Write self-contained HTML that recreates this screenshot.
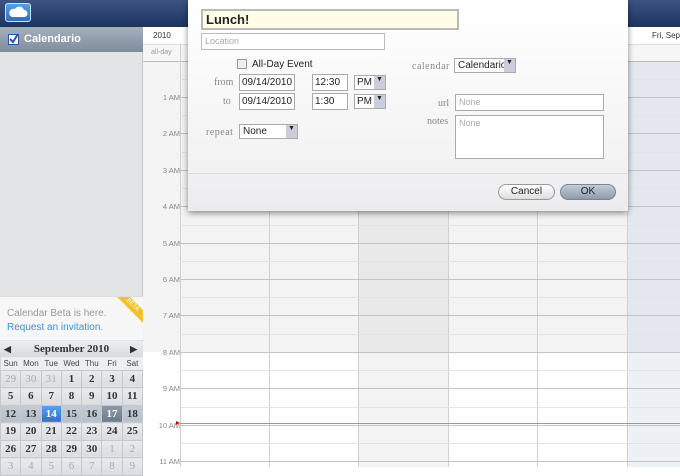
<!DOCTYPE html>
<html><head><meta charset="utf-8"><style>
*{box-sizing:border-box;margin:0;padding:0}
body{width:680px;height:467px;overflow:hidden;position:relative;font-family:"Liberation Sans",sans-serif;background:#fff}
.abs{position:absolute}
#top{left:0;top:0;width:680px;height:27px;background:linear-gradient(#3c5483,#1d3361)}
#logo{left:5px;top:3px;width:26px;height:19px;border:1px solid #cfe0f5;border-radius:3px;background:linear-gradient(#5a9ee0,#2d6fbf)}
#side{left:0;top:27px;width:143px;height:440px;background:#e3e4e6;border-right:1px solid #c8c8c8}
#calrow{left:0;top:27px;width:143px;height:25px;background:linear-gradient(#a6b0bd,#7f8c9c);color:#fff;font-weight:bold;font-size:11px;line-height:25px;padding-left:24px}
#chk{left:8px;top:34px;width:11px;height:11px;background:#fff;border:1px solid #2a56a0}
#beta{left:0;top:296px;width:143px;height:44px;background:#f7f7f7;border-top:1px solid #ddd;font-size:10px;padding:10px 0 0 7px;color:#999;line-height:14px;overflow:hidden}
#beta a{color:#3f8fce}
#ribbon{right:-14px;top:4px;width:50px;height:9px;background:#f2c22c;transform:rotate(45deg);font-size:6px;color:#fff;text-align:center;line-height:9px}
#mini{left:0;top:341px;width:143px;height:126px;background:#d3d7dc;font-family:"Liberation Serif",serif}
#mini .hd{height:16px;background:linear-gradient(#eceef0,#d8dbde);font-weight:bold;font-size:11px;text-align:center;line-height:16px;color:#333;position:relative}
#mini table{border-collapse:collapse;width:143px;table-layout:fixed}
#mini td{text-align:center;font-size:11px;font-weight:bold;color:#333;height:17.5px;border:1px solid #c5c9ce;background:linear-gradient(#e9ebee,#d9dce0)}
#mini th{font-size:8px;font-weight:normal;color:#444;height:13px;background:#eceef0;font-family:"Liberation Sans",sans-serif}
#mini td.o{color:#aaa;font-weight:normal}
#mini tr.w2 td{background:linear-gradient(#c6ccd4,#b7bfc9)}
#mini td.t{background:linear-gradient(#5ea2e8,#2a72cc)!important;color:#fff}
#mini td.s{background:linear-gradient(#8d9aaa,#6c7b8d)!important;color:#fff}
#grid{left:143px;top:27px;width:537px;height:440px}
.lbl{position:absolute;right:0;width:33px;text-align:right;font-size:7.5px;color:#888}
</style></head><body>
<div id="top" class="abs"></div>
<div id="logo" class="abs"><svg width="24" height="17"><path d="M6 13 h12 a3.5 3.5 0 0 0 0-7 a5 5 0 0 0-9-1 a3.5 3.5 0 0 0-3 8z" fill="#fff"/></svg></div>
<div id="side" class="abs"></div>
<div id="calrow" class="abs">Calendario</div>
<div id="chk" class="abs"><svg width="10" height="10" style="position:absolute;left:0;top:-1px"><path d="M1 5 L4 8 L9 0" stroke="#2a56a0" stroke-width="2" fill="none"/></svg></div>
<div id="beta" class="abs">Calendar Beta is here.<br><a>Request an invitation.</a><div id="ribbon" class="abs">BETA</div></div>
<div id="mini" class="abs"><div class="hd"><span style="position:absolute;left:4px;font-size:9px">◀</span>September 2010<span style="position:absolute;right:6px;font-size:9px">▶</span></div>
<table>
<tr><th>Sun</th><th>Mon</th><th>Tue</th><th>Wed</th><th>Thu</th><th>Fri</th><th>Sat</th></tr>
<tr><td class="o">29</td><td class="o">30</td><td class="o">31</td><td>1</td><td>2</td><td>3</td><td>4</td></tr>
<tr><td>5</td><td>6</td><td>7</td><td>8</td><td>9</td><td>10</td><td>11</td></tr>
<tr class="w2"><td>12</td><td>13</td><td class="t">14</td><td>15</td><td>16</td><td class="s">17</td><td>18</td></tr>
<tr><td>19</td><td>20</td><td>21</td><td>22</td><td>23</td><td>24</td><td>25</td></tr>
<tr><td>26</td><td>27</td><td>28</td><td>29</td><td>30</td><td class="o">1</td><td class="o">2</td></tr>
<tr><td class="o">3</td><td class="o">4</td><td class="o">5</td><td class="o">6</td><td class="o">7</td><td class="o">8</td><td class="o">9</td></tr>
</table></div>
<div id="grid" class="abs">
<svg width="537" height="440" style="position:absolute;left:0;top:0">
<rect x="0" y="0" width="537" height="440" fill="#fff"/>
<rect x="37" y="35" width="500" height="290" fill="#f3f3f3"/>
<rect x="0" y="35" width="37" height="290" fill="#f3f3f3"/>
<rect x="215" y="35" width="90" height="290" fill="#e9e9e9"/>
<rect x="215" y="325" width="90" height="115" fill="#f3f3f3"/>
<rect x="484" y="17" width="53" height="308" fill="#e4e8ee"/>
<rect x="484" y="325" width="53" height="115" fill="#edf1f6"/>
<rect x="0" y="0" width="537" height="17" fill="#fff"/>
<rect x="0" y="17" width="537" height="18" fill="#f6f6f6"/>
<line x1="0" y1="17.5" x2="537" y2="17.5" stroke="#ddd"/>
<line x1="0" y1="34.5" x2="537" y2="34.5" stroke="#bbb"/>
<g stroke="#d0d0d0">
<line x1="37.5" y1="17" x2="37.5" y2="440"/><line x1="126.5" y1="35" x2="126.5" y2="440"/><line x1="215.5" y1="35" x2="215.5" y2="440"/><line x1="305.5" y1="35" x2="305.5" y2="440"/><line x1="394.5" y1="35" x2="394.5" y2="440"/><line x1="484.5" y1="0" x2="484.5" y2="440"/>
</g>
<g id="h"></g>
<path d="M33 394 l4 2 l-4 2z" fill="#c00"/>
</svg>
<div class="abs" style="left:10px;top:4px;font-size:8px;color:#333">2010</div>
<div class="abs" style="left:8px;top:22px;font-size:7px;color:#999">all-day</div>
<div class="abs" style="left:509px;top:4px;font-size:8px;color:#333">Fri, Sep</div>
</div>
<script>
var g=document.getElementById('h'),s='',L=document.getElementById('grid');
for(var i=1;i<=11;i++){var y=Math.round(70+(i-1)*36.4);s+='<line x1="37" y1="'+(y+.5)+'" x2="537" y2="'+(y+.5)+'" stroke="#c4c4c4"/><line x1="37" y1="'+(y-17.5)+'" x2="537" y2="'+(y-17.5)+'" stroke="#e3e3e3"/>';
var d=document.createElement('div');d.className='lbl';d.style.top=(y-4)+'px';d.style.right='500px';d.textContent=i+' AM';L.appendChild(d);}
s+='<line x1="37" y1="396.5" x2="537" y2="396.5" stroke="#999"/>';
g.innerHTML=s;
</script>
<div class="abs" style="left:188px;top:0;width:440px;height:211px;background:linear-gradient(#fff,#f4f4f5 70%,#ececee);box-shadow:0 2px 6px rgba(0,0,0,.45);font-size:10px;color:#222">
<div class="abs" style="left:13px;top:9px;width:258px;height:21px;border:2px solid #b9b9b9;background:#fffde6;font-weight:bold;font-size:13px;padding-left:3px;line-height:17px">Lunch!</div>
<div class="abs" style="left:13px;top:33px;width:184px;height:17px;border:1px solid #bbb;background:#fff;color:#aaa;font-size:9px;padding:2px 3px">Location</div>
<div class="abs" style="left:49px;top:59px;width:10px;height:10px;border:1px solid #999;background:#eee"></div>
<div class="abs" style="left:64px;top:59px">All-Day Event</div>
<div class="abs" style="left:26px;top:77px;color:#888;font-family:'Liberation Serif',serif">from</div>
<div class="abs" style="left:35px;top:96px;color:#888;font-family:'Liberation Serif',serif">to</div>
<div class="abs" style="left:18px;top:127px;color:#888;font-family:'Liberation Serif',serif;letter-spacing:.5px">repeat</div>
<div class="abs" style="left:141px;top:77px;color:#888;font-family:'Liberation Serif',serif">at</div>
<div class="abs" style="left:141px;top:96px;color:#888;font-family:'Liberation Serif',serif">at</div>
<div class="abs" style="left:51px;top:74px;width:56px;height:17px;border:1px solid #aaa;background:#fff;padding:2px">09/14/2010</div>
<div class="abs" style="left:51px;top:93px;width:56px;height:17px;border:1px solid #aaa;background:#fff;padding:2px">09/14/2010</div>
<div class="abs" style="left:124px;top:74px;width:36px;height:17px;border:1px solid #aaa;background:#fff;padding:2px">12:30</div>
<div class="abs" style="left:124px;top:93px;width:36px;height:17px;border:1px solid #aaa;background:#fff;padding:2px">1:30</div>
<div class="abs" style="left:166px;top:75px;width:32px;height:15px;border:1px solid #aaa;background:#fff;padding:1px 2px">PM<span style="position:absolute;right:0;top:0;width:11px;height:13px;background:#ccd;font-size:7px;text-align:center">▼</span></div>
<div class="abs" style="left:166px;top:94px;width:32px;height:15px;border:1px solid #aaa;background:#fff;padding:1px 2px">PM<span style="position:absolute;right:0;top:0;width:11px;height:13px;background:#ccd;font-size:7px;text-align:center">▼</span></div>
<div class="abs" style="left:51px;top:124px;width:59px;height:15px;border:1px solid #aaa;background:#fff;padding:1px 3px">None<span style="position:absolute;right:0;top:0;width:11px;height:13px;background:#ccd;font-size:7px;text-align:center">▼</span></div>
<div class="abs" style="left:224px;top:61px;color:#888;font-family:'Liberation Serif',serif;letter-spacing:.5px">calendar</div>
<div class="abs" style="left:266px;top:58px;width:62px;height:15px;border:1px solid #aaa;background:#fff;padding:1px 3px">Calendario<span style="position:absolute;right:0;top:0;width:11px;height:13px;background:#ccd;font-size:7px;text-align:center">▼</span></div>
<div class="abs" style="left:250px;top:98px;color:#888;font-family:'Liberation Serif',serif">url</div>
<div class="abs" style="left:239px;top:116px;color:#888;font-family:'Liberation Serif',serif">notes</div>
<div class="abs" style="left:267px;top:94px;width:149px;height:17px;border:1px solid #aaa;background:#fff;color:#aaa;font-size:9px;padding:2px 3px">None</div>
<div class="abs" style="left:267px;top:115px;width:149px;height:44px;border:1px solid #aaa;background:#fff;color:#aaa;font-size:9px;padding:2px 3px">None</div>
<div class="abs" style="left:0;top:173px;width:440px;height:1px;background:#ddd"></div>
<div class="abs" style="left:310px;top:184px;width:57px;height:16px;border:1px solid #999;border-radius:8px;background:linear-gradient(#fff,#ddd);text-align:center;line-height:14px;font-size:10px">Cancel</div>
<div class="abs" style="left:372px;top:184px;width:56px;height:16px;border:1px solid #7a8597;border-radius:8px;background:linear-gradient(#c3cbd6,#8f9bad);text-align:center;line-height:14px;font-size:10px">OK</div>
</div>
</body></html>
